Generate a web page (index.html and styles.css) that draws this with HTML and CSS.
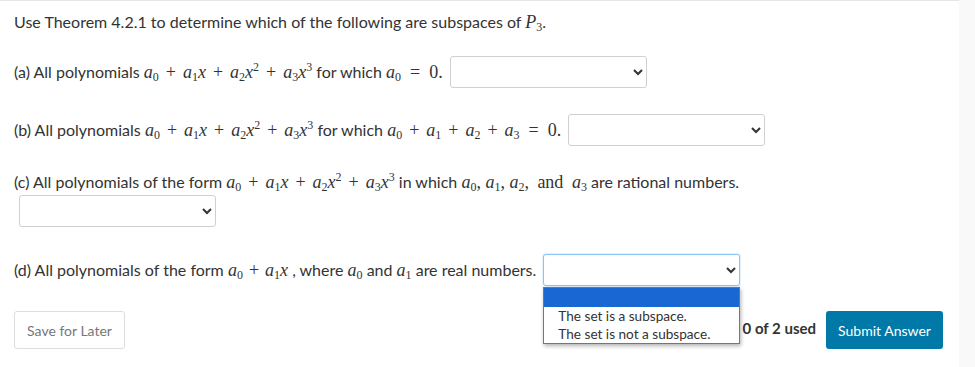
FILE: index.html
```html
<!DOCTYPE html>
<html>
<head>
<meta charset="utf-8">
<link rel="stylesheet" href="styles.css">
</head>
<body>
<div class="shell">
  <div class="page">
    <p class="title">Use Theorem 4.2.1 to determine which of the following are subspaces of <span class="m"><i>P</i><sub>3</sub></span>.</p>

    <div class="row row-a">
      <span class="txt">(a) All polynomials <span class="m"><i>a</i><sub>0</sub><span class="op">+</span><i>a</i><sub>1</sub><i>x</i><span class="op">+</span><i>a</i><sub>2</sub><i>x</i><sup>2</sup><span class="op">+</span><i>a</i><sub>3</sub><i>x</i><sup>3</sup></span> for which <span class="m"><i>a</i><sub>0</sub><span class="op op-eq">=</span>0.</span></span>
      <select class="sel"><option></option><option>The set is a subspace.</option><option>The set is not a subspace.</option></select>
    </div>

    <div class="row row-b">
      <span class="txt">(b) All polynomials <span class="m"><i>a</i><sub>0</sub><span class="op">+</span><i>a</i><sub>1</sub><i>x</i><span class="op">+</span><i>a</i><sub>2</sub><i>x</i><sup>2</sup><span class="op">+</span><i>a</i><sub>3</sub><i>x</i><sup>3</sup></span> for which <span class="m"><i>a</i><sub>0</sub><span class="op">+</span><i>a</i><sub>1</sub><span class="op">+</span><i>a</i><sub>2</sub><span class="op">+</span><i>a</i><sub>3</sub><span class="op op-eq">=</span>0.</span></span>
      <select class="sel"><option></option><option>The set is a subspace.</option><option>The set is not a subspace.</option></select>
    </div>

    <p class="line-c">(c) All polynomials of the form <span class="m"><i>a</i><sub>0</sub><span class="op">+</span><i>a</i><sub>1</sub><i>x</i><span class="op">+</span><i>a</i><sub>2</sub><i>x</i><sup>2</sup><span class="op">+</span><i>a</i><sub>3</sub><i>x</i><sup>3</sup></span> in which <span class="m"><i>a</i><sub>0</sub>, <i>a</i><sub>1</sub>, <i>a</i><sub>2</sub>, <span class="and">and</span> <i>a</i><sub>3</sub></span> are rational numbers.</p>
    <select class="sel sel-c"><option></option><option>The set is a subspace.</option><option>The set is not a subspace.</option></select>

    <div class="row row-d">
      <span class="txt">(d) All polynomials of the form <span class="m"><i>a</i><sub>0</sub><span class="op op-d">+</span><i>a</i><sub>1</sub><i>x</i></span> , where <span class="m"><i>a</i><sub>0</sub></span> and <span class="m"><i>a</i><sub>1</sub></span> are real numbers.</span>
      <div class="dd">
        <select class="sel sel-focus"><option></option><option>The set is a subspace.</option><option>The set is not a subspace.</option></select>
        <ul class="menu">
          <li class="opt opt-hl"></li>
          <li class="opt">The set is a subspace.</li>
          <li class="opt">The set is not a subspace.</li>
        </ul>
      </div>
    </div>

    <div class="actions">
      <button class="btn-save">Save for Later</button>
      <div class="right">
        <span class="used">0 of 2 used</span>
        <button class="btn-submit">Submit Answer</button>
      </div>
    </div>
  </div>
  <div class="strip"></div>
</div>
</body>
</html>
```

FILE: styles.css
```css
html, body {
  margin: 0;
  padding: 0;
  background: #ffffff;
}
body {
  font-family: Lato, "Liberation Sans", sans-serif;
  color: #333333;
  font-size: 16px;
}
.shell {
  display: flex;
  width: 975px;
  height: 367px;
  overflow: hidden;
}
.page {
  width: 959px;
  box-sizing: border-box;
  border-top: 1px solid #e6e6e6;
  padding: 11px 16px 0 14px;
}
.strip {
  width: 16px;
  background: #f9f9f9;
}
.title {
  margin: 0;
  line-height: 20px;
}
.m {
  font-family: "Liberation Serif", "Times New Roman", serif;
  font-size: 18px;
  white-space: nowrap;
}
.m i {
  font-family: "Liberation Serif", serif;
  font-style: italic;
}
.m sub, .m sup {
  font-family: "Liberation Serif", serif;
  font-size: 12px;
  font-style: normal;
  line-height: 0;
}
.m sub {
  vertical-align: -3px;
}
.m sup {
  vertical-align: 7px;
}
.op {
  margin: 0 7px;
}
.op-eq {
  margin: 0 9px;
}
.op-d {
  margin: 0 6px;
}
.and {
  margin: 0 4px;
}
.row {
  display: flex;
  align-items: center;
  height: 32px;
}
.txt {
  line-height: 20px;
}
.row-a { margin-top: 24px; }
.row-b { margin-top: 26px; }
.row-d { margin-top: 27px; }
.sel {
  width: 197px;
  height: 32px;
  margin-left: 7px;
  border: 1px solid #d0d0d0;
  border-radius: 3px;
  background: #ffffff;
  font-family: Lato, sans-serif;
  font-size: 14px;
  color: #333;
}
.line-c {
  margin: 26px 0 0 0;
  line-height: 20px;
}
.sel-c {
  display: block;
  margin: 3px 0 0 5px;
}
.dd {
  position: relative;
}
.sel-focus {
  border-color: #8cc4f5;
  box-shadow: 0 0 0 1px rgba(140, 196, 245, 0.25);
}
.menu {
  position: absolute;
  left: 7px;
  top: 33px;
  width: 197px;
  box-sizing: border-box;
  margin: 0;
  padding: 0;
  list-style: none;
  background: #ffffff;
  border: 1px solid #767676;
  box-shadow: 1px 2px 4px rgba(0, 0, 0, 0.3);
  z-index: 5;
}
.opt {
  height: 18px;
  line-height: 18px;
  padding-left: 14px;
  font-size: 13.6px;
  color: #333;
}
.opt-hl {
  height: 19px;
  background: #1967d2;
}
.actions {
  margin-top: 25px;
  display: flex;
  justify-content: space-between;
  align-items: center;
}
.btn-save {
  width: 111px;
  height: 38px;
  border: 1px solid #dddddd;
  border-radius: 3px;
  background: #ffffff;
  color: #777777;
  font-family: Lato, sans-serif;
  font-size: 14px;
  padding: 0;
}
.right {
  display: flex;
  align-items: center;
}
.used {
  font-weight: 700;
  font-size: 15px;
  color: #333;
  margin-right: 10px;
  margin-top: -5px;
}
.btn-submit {
  width: 117px;
  height: 38px;
  border: none;
  border-radius: 3px;
  background: #0079a8;
  color: #ffffff;
  font-family: Lato, sans-serif;
  font-size: 14px;
  padding: 0;
}
```
